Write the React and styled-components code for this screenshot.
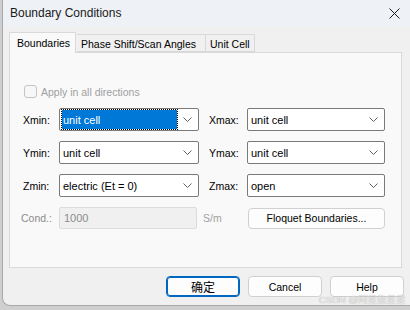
import React from 'react';
import styled, { createGlobalStyle } from 'styled-components';

const Global = createGlobalStyle`
  html, body {
    margin: 0;
    padding: 0;
    width: 410px;
    height: 310px;
    overflow: hidden;
    background: #cfcfcf;
  }
  * { box-sizing: border-box; }
`;

const Window = styled.div`
  position: relative;
  margin-left: 2px;
  width: 420px;
  height: 306px;
  background: #f0f0f0;
  border-left: 1px solid #a8a8a8;
  border-bottom: 1px solid #a8a8a8;
  border-bottom-left-radius: 8px;
  font-family: "Liberation Sans", Arial, sans-serif;
  color: #000;
  display: flex;
  flex-direction: column;
  overflow: hidden;
`;

const TitleBar = styled.div`
  height: 26px;
  flex: none;
  background: #eef2f6;
  display: flex;
  align-items: center;
  justify-content: space-between;
  padding: 0 0 0 7px;
  width: 408px;
  font-size: 12px;
  color: #1a1a1a;
`;

const CloseBtn = styled.div`
  width: 30px;
  height: 26px;
  display: flex;
  align-items: center;
  justify-content: center;
  margin-right: 2px;
`;

const Body = styled.div`
  padding: 5px 0 0 6px;
  width: 408px;
  display: flex;
  flex-direction: column;
`;

const TabRow = styled.div`
  display: flex;
  align-items: flex-end;
  height: 21px;
  position: relative;
  z-index: 1;
`;

const Tab = styled.div`
  width: ${(p) => p.$w}px;
  height: ${(p) => (p.$active ? 21 : 18)}px;
  margin-bottom: ${(p) => (p.$active ? -1 : 0)}px;
  background: ${(p) => (p.$active ? '#f9f9f9' : '#f0f0f0')};
  border: 1px solid #d9d9d9;
  border-bottom: ${(p) => (p.$active ? 'none' : '1px solid #d9d9d9')};
  border-left: ${(p) => (p.$first ? '1px solid #d9d9d9' : 'none')};
  font-size: 10.5px;
  display: flex;
  align-items: center;
  padding-left: ${(p) => p.$pad}px;
  padding-top: ${(p) => (p.$active ? 0 : 1)}px;
  margin-right: ${(p) => (p.$active ? 1 : 0)}px;
  white-space: nowrap;
`;

const Panel = styled.div`
  width: 393px;
  height: 216px;
  background: #f9f9f9;
  border: 1px solid #d9d9d9;
  padding: 32px 0 0 13px;
`;

const FormGrid = styled.div`
  display: grid;
  grid-template-columns: 36px 140px 10px 38px 138px;
  grid-template-rows: 13px 23px 23px 23px 22px;
  row-gap: 10px;
  align-items: center;
`;

const CheckRow = styled.label`
  grid-column: 1 / -1;
  height: 13px;
  display: flex;
  align-items: center;
  gap: 4px;
  padding-left: 1px;
  font-size: 10.5px;
  color: #a0a0a0;
`;

const Box = styled.span`
  width: 13px;
  height: 13px;
  border: 1px solid #c4c4c4;
  border-radius: 3px;
  background: #f7f7f7;
`;

const Label = styled.div`
  font-size: 10.5px;
  color: ${(p) => (p.$disabled ? '#8c8c8c' : '#000')};
  margin-left: ${(p) => p.$shift || 0}px;
  white-space: nowrap;
`;

const Combo = styled.div`
  height: 23px;
  border: 1px solid #7a7a7a;
  border-radius: 2px;
  background: #fff;
  display: flex;
  align-items: center;
  justify-content: space-between;
  padding: 0 6px 0 2px;
  font-size: 11px;
`;

const ComboText = styled.span`
  height: 19px;
  display: flex;
  align-items: center;
  padding-left: 1px;
  flex: ${(p) => (p.$focused ? '0 0 115px' : '1')};
  background: ${(p) => (p.$focused ? '#0078d7' : 'transparent')};
  color: ${(p) => (p.$focused ? '#fff' : '#000')};
  outline: ${(p) => (p.$focused ? '1px dotted #000' : 'none')};
  outline-offset: 0;
`;

const TextInput = styled.div`
  height: 22px;
  width: 138px;
  border: 1px solid #dcdcdc;
  border-radius: 2px;
  background: #f0f0f0;
  color: #8c8c8c;
  font-size: 11px;
  display: flex;
  align-items: center;
  padding-left: 4px;
`;

const Unit = styled.div`
  grid-column: 3 / 5;
  font-size: 10.5px;
  color: #a0a0a0;
  padding-left: 4px;
`;

const Button = styled.div`
  width: ${(p) => p.$w || 74}px;
  height: 21px;
  border: ${(p) => (p.$default ? '1px solid #0067c0' : '1px solid #d0d0d0')};
  box-shadow: ${(p) => (p.$default ? 'inset 0 0 0 1px #0067c0' : 'none')};
  border-radius: 4px;
  background: #fdfdfd;
  display: flex;
  align-items: center;
  justify-content: center;
  font-size: 10.5px;
  font-family: "Liberation Sans", "Noto Sans CJK SC", sans-serif;
  margin-left: ${(p) => p.$ml || 0}px;
`;

const Footer = styled.div`
  display: flex;
  gap: 8px;
  padding: 8px 0 0 157px;
`;

const CjkText = styled.span`
  font-family: "Noto Sans CJK SC", sans-serif;
  font-size: 12px;
`;

const Watermark = styled.div`
  position: absolute;
  left: 316px;
  top: 292px;
  font-family: "Liberation Sans", "Noto Sans CJK SC", sans-serif;
  font-size: 9.5px;
  color: rgba(255, 255, 255, 0.85);
  text-shadow: 0 0 1px rgba(0, 0, 0, 0.45);
  white-space: nowrap;
`;

const Chevron = () => (
  <svg width="9" height="5" viewBox="0 0 9 5">
    <polyline points="0.5,0.5 4.5,4.5 8.5,0.5" fill="none" stroke="#606060" strokeWidth="1" />
  </svg>
);

const Select = ({ value, focused }) => (
  <Combo>
    <ComboText $focused={focused}>{value}</ComboText>
    <Chevron />
  </Combo>
);

const App = () => (
  <>
    <Global />
    <Window>
      <TitleBar>
        <span>Boundary Conditions</span>
        <CloseBtn>
          <svg width="11" height="11" viewBox="0 0 11 11">
            <path d="M0.5 0.5 L10.5 10.5 M10.5 0.5 L0.5 10.5" stroke="#1a1a1a" strokeWidth="1" />
          </svg>
        </CloseBtn>
      </TitleBar>
      <Body>
        <TabRow>
          <Tab $active $first $w={67} $pad={7}>Boundaries</Tab>
          <Tab $w={129} $pad={4}>Phase Shift/Scan Angles</Tab>
          <Tab $w={49} $pad={4}>Unit Cell</Tab>
        </TabRow>
        <Panel>
          <FormGrid>
            <CheckRow>
              <Box />
              Apply in all directions
            </CheckRow>

            <Label>Xmin:</Label>
            <Select value="unit cell" focused />
            <span />
            <Label>Xmax:</Label>
            <Select value="unit cell" />

            <Label>Ymin:</Label>
            <Select value="unit cell" />
            <span />
            <Label>Ymax:</Label>
            <Select value="unit cell" />

            <Label>Zmin:</Label>
            <Select value="electric (Et = 0)" />
            <span />
            <Label>Zmax:</Label>
            <Select value="open" />

            <Label $disabled $shift={-2}>Cond.:</Label>
            <TextInput>1000</TextInput>
            <Unit>S/m</Unit>
            <Button $w={137} $ml={1}>Floquet Boundaries...</Button>
          </FormGrid>
        </Panel>
        <Footer>
          <Button $default><CjkText>确定</CjkText></Button>
          <Button>Cancel</Button>
          <Button>Help</Button>
        </Footer>
      </Body>
      <Watermark>CSDN @阿星数星星</Watermark>
    </Window>
  </>
);

export default App;
